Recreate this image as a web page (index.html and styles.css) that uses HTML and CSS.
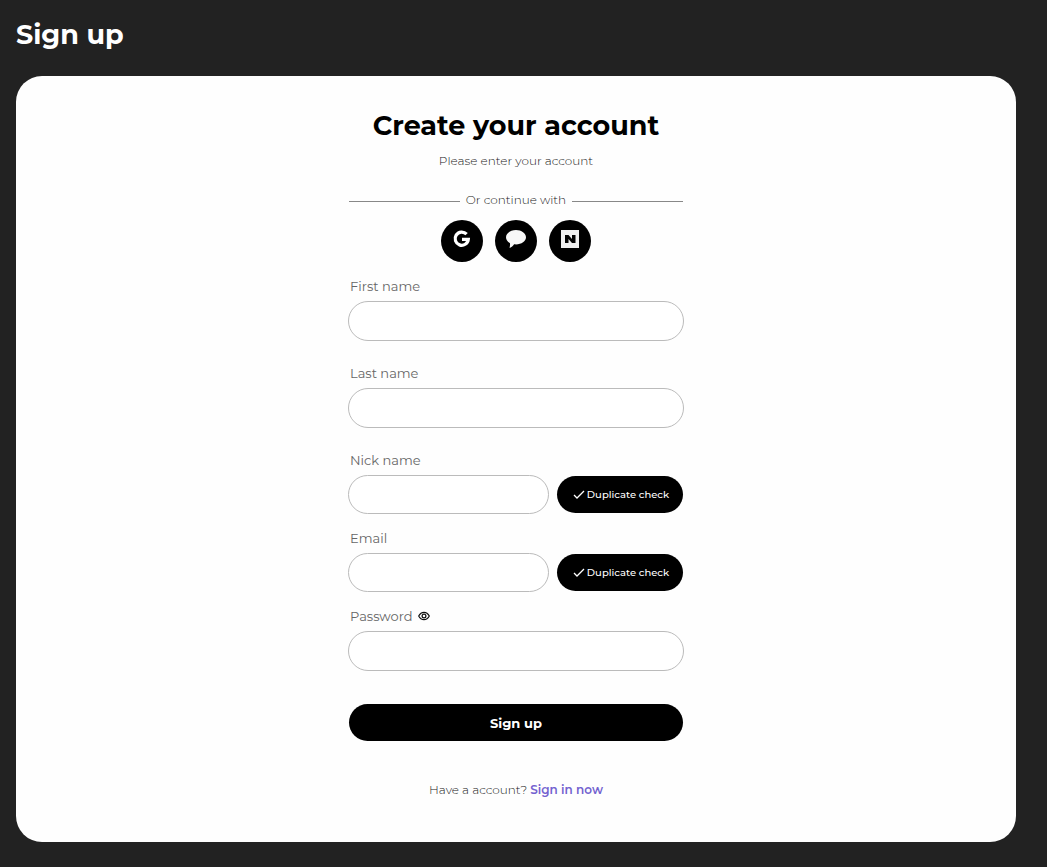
FILE: index.html
```html
<!DOCTYPE html>
<html lang="en">
<head>
    <meta charset="UTF-8">
    <meta name="viewport" content="width=device-width, initial-scale=1.0">
    <title>Sign up</title>
    <link rel="stylesheet" href="styles.css">
</head>
<body>

    <h1 class="page-title">Sign up</h1>

    <main class="card">
        <h2 class="card-title">Create your account</h2>
        <p class="card-subtitle">Please enter your account</p>

        <form class="signup-form">
            <div class="divider">Or continue with</div>

            <div class="social">
                <button type="button" class="social-button" aria-label="Google">
                    <svg width="20" height="20" viewBox="0 0 20 20" fill="none" stroke="#fff" stroke-width="3.200">
                        <path d="M14.600 5.200A6.600 6.600 0 1 0 16.300 10.300H10"/>
                    </svg>
                </button>
                <button type="button" class="social-button" aria-label="Kakao">
                    <svg width="20" height="20" viewBox="0 0 20 20" fill="#f8f8f8">
                        <path d="M10 1C4.500 1 0 4.200 0 8.300c0 2.400 1.500 4.500 3.900 5.800.3 1.500.1 2.900-.3 4.300-.1.400.3.600.6.400 1.800-.9 3-2.100 3.900-3.500.6.100 1.300.1 1.900.1 5.500 0 10-3.100 10-7.100S15.500 1 10 1z"/>
                    </svg>
                </button>
                <button type="button" class="social-button" aria-label="Naver">
                    <svg width="20" height="20" viewBox="0 0 20 20">
                        <path fill="#eee" fill-rule="evenodd" d="M1 1h18v18H1zM5 6v8h3.500v-4l3.500 4h3.500V6H12v4L8.500 6z"/>
                    </svg>
                </button>
            </div>

            <div class="field">
                <label for="firstName">First name</label>
                <input type="text" id="firstName">
            </div>

            <div class="field">
                <label for="lastName">Last name</label>
                <input type="text" id="lastName">
            </div>

            <div class="field field-compact">
                <label for="nickName">Nick name</label>
                <div class="field-row">
                    <input type="text" id="nickName">
                    <button type="button" class="check-button">
                        <svg width="12" height="12" viewBox="0 0 12 12" fill="none" stroke="#fff" stroke-width="1.300"><path d="M1 6L4 9L11 2"/></svg>
                        Duplicate check
                    </button>
                </div>
            </div>

            <div class="field field-compact">
                <label for="email">Email</label>
                <div class="field-row">
                    <input type="email" id="email">
                    <button type="button" class="check-button">
                        <svg width="12" height="12" viewBox="0 0 12 12" fill="none" stroke="#fff" stroke-width="1.300"><path d="M1 6L4 9L11 2"/></svg>
                        Duplicate check
                    </button>
                </div>
            </div>

            <div class="field">
                <div class="label-row">
                    <label for="password">Password</label>
                    <button type="button" class="eye-button" id="togglePassword" aria-label="Show password">
                        <svg width="12" height="12" viewBox="0 0 12 12" fill="none" stroke="#111" stroke-width="1.200">
                            <path d="M.7 6C2 3.500 3.800 2.300 6 2.300S10 3.500 11.300 6C10 8.500 8.200 9.700 6 9.700S2 8.500.7 6z"/>
                            <circle cx="6" cy="6" r="1.900"/>
                        </svg>
                    </button>
                </div>
                <input type="password" id="password">
            </div>

            <button type="submit" class="submit-button">Sign up</button>
        </form>

        <p class="signin">Have a account? <a href="#">Sign in now</a></p>
    </main>

    <script>
        // Show or hide the password
        const password = document.getElementById('password');

        document.getElementById('togglePassword').onclick = function() {
            password.type = password.type === 'password' ? 'text' : 'password';
        };
    </script>

</body>
</html>
```

FILE: styles.css
```css
* {
    box-sizing: border-box;
}
body {
    margin: 0;
    padding: 17px 31px 25px 16px;
    background-color: #222;
    font-family: Montserrat, Inter, sans-serif;
    color: #222;
}
h1, h2, p {
    margin: 0;
}
button, input {
    font-family: inherit;
}
button {
    border: none;
    padding: 0;
    cursor: pointer;
}
.page-title {
    margin-bottom: 23px;
    font-size: 27px;
    line-height: 36px;
    color: white;
}
.card {
    padding: 32px 16px 42px;
    background-color: #fefefe;
    border-radius: 26px;
    text-align: center;
}
.card-title {
    font-size: 27px;
    line-height: 36px;
    color: black;
}
.card-subtitle {
    margin: 7px 0 19px;
    font-size: 12px;
    font-weight: 300;
    line-height: 20px;
}
.signup-form {
    max-width: 336px;
    margin: 0 auto;
}
.divider {
    display: flex;
    align-items: center;
    gap: 6px;
    margin: 0 1px;
    font-size: 12px;
    font-weight: 300;
    line-height: 20px;
}
.divider::before,
.divider::after {
    content: "";
    flex: 1;
    margin-top: 2px;
    border-top: 1px solid #888;
}
.social {
    display: flex;
    justify-content: center;
    gap: 12px;
    margin: 10px 0 14px;
}
.social-button {
    display: flex;
    align-items: center;
    justify-content: center;
    width: 42px;
    height: 42px;
    padding-bottom: 4px;
    border-radius: 50%;
    background-color: black;
}
.field {
    display: flex;
    flex-direction: column;
    gap: 5px;
    margin-bottom: 22px;
    text-align: left;
}
.field-compact {
    margin-bottom: 14px;
}
.field label {
    padding-left: 2px;
    font-size: 13px;
    line-height: 20px;
    color: #666;
}
.field input {
    width: 100%;
    min-width: 0;
    height: 40px;
    padding: 0 16px;
    border: 1px solid #bbb;
    border-radius: 20px;
    background-color: white;
    font-size: 13px;
}
.field-row {
    display: flex;
    align-items: center;
    gap: 8px;
    padding-right: 1px;
}
.field-row input {
    height: 39px;
}
.check-button {
    display: flex;
    flex: none;
    align-items: center;
    justify-content: center;
    gap: 2px;
    width: 126px;
    height: 37px;
    padding-left: 2px;
    border-radius: 19px;
    background-color: black;
    color: white;
    font-size: 10px;
    font-weight: 500;
    white-space: nowrap;
}
.label-row {
    display: flex;
    align-items: center;
    gap: 5px;
}
.eye-button {
    display: flex;
    background: none;
}
.submit-button {
    display: block;
    width: calc(100% - 2px);
    height: 37px;
    margin: 33px auto 39px;
    border-radius: 19px;
    background-color: black;
    color: white;
    font-size: 13px;
    font-weight: bold;
}
.signin {
    font-size: 12px;
    font-weight: 300;
    line-height: 20px;
}
.signin a {
    color: #7362d0;
    font-weight: 600;
    text-decoration: none;
}
```
